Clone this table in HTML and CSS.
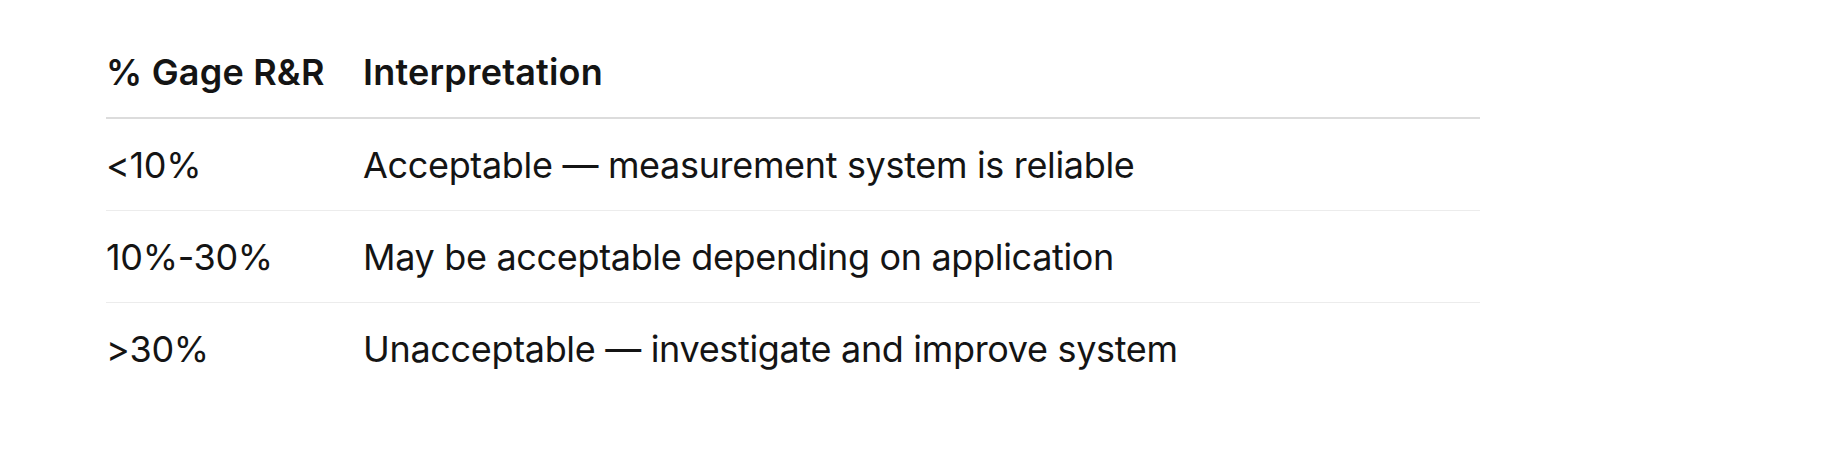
FILE: index.html
```html
<!DOCTYPE html>
<html lang="en">
<head>
<meta charset="utf-8">
<title>Gage R&amp;R</title>
<link rel="stylesheet" href="styles.css">
</head>
<body>
<div class="page">
  <div class="table">
    <div class="row head">
      <div class="cell c1">% Gage R&amp;R</div>
      <div class="cell c2">Interpretation</div>
    </div>
    <div class="row">
      <div class="cell c1">&lt;10%</div>
      <div class="cell c2">Acceptable — measurement system is reliable</div>
    </div>
    <div class="row">
      <div class="cell c1">10%-30%</div>
      <div class="cell c2">May be acceptable depending on application</div>
    </div>
    <div class="row last">
      <div class="cell c1">&gt;30%</div>
      <div class="cell c2">Unacceptable — investigate and improve system</div>
    </div>
  </div>
</div>
</body>
</html>
```
FILE: styles.css
```css
html, body {
  margin: 0;
  padding: 0;
  background: #ffffff;
}
body {
  font-family: Inter, "Noto Sans", "Liberation Sans", sans-serif;
  color: #141414;
  font-size: 36px;
  line-height: 54px;
}
.page {
  padding: 26px 0 0 106px;
}
.table {
  width: 1374px;
  display: flex;
  flex-direction: column;
}
.row {
  display: grid;
  grid-template-columns: 257px 1fr;
  border-bottom: 1px solid #ececec;
  letter-spacing: -0.33px;
}
.row.head {
  border-bottom: 2px solid #dcdcdc;
  font-weight: 600;
  letter-spacing: 0.2px;
}
.row.last {
  border-bottom: none;
}
.cell {
  padding: 19px 0 18px 0;
  white-space: nowrap;
}
```
